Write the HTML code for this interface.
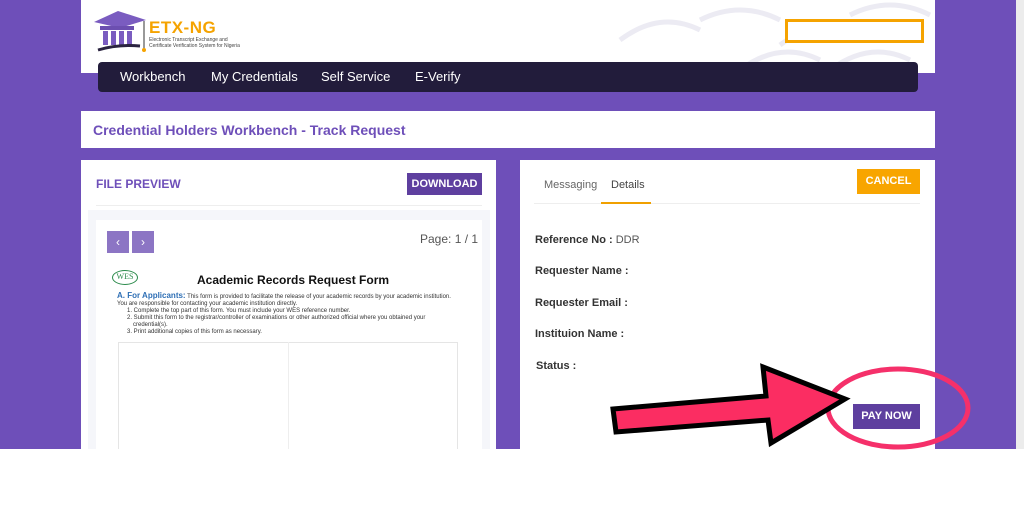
<!DOCTYPE html>
<html><head><meta charset="utf-8"><style>
*{margin:0;padding:0;box-sizing:border-box}
body{width:1024px;height:516px;background:#fff;font-family:"Liberation Sans",Arial,sans-serif;position:relative;overflow:hidden}
.a{position:absolute}
.purple{background:#6e4fb9}
</style></head><body>
<div class="a purple" style="left:0;top:0;width:1016px;height:449px"></div>
<div class="a" style="left:1016px;top:0;width:8px;height:449px;background:#ececec"></div>
<div class="a" style="left:81px;top:0;width:854px;height:73px;background:#fff"></div>
<svg class="a" style="left:600px;top:0" width="335" height="73">
<g fill="none" stroke="#ecebf3" stroke-width="5">
<path d="M20 40 q40-30 80-10 M100 20 q40-20 80 0 M180 45 q40-30 80-10 M250 15 q40-20 80 0 M140 70 q40-30 80-10 M230 70 q40-30 80-10"/>
</g></svg>
<svg class="a" style="left:92px;top:8px" width="60" height="45" viewBox="0 0 60 45">
<path d="M2 14 L26 3 L54 12 L28 20 Z" fill="#7a5cc0"/>
<path d="M8 18 h34 v4 h-34z" fill="#6c4fb0"/>
<rect x="11" y="23" width="5" height="14" fill="#7a5cc0"/><rect x="19" y="23" width="5" height="14" fill="#7a5cc0"/><rect x="27" y="23" width="5" height="14" fill="#7a5cc0"/><rect x="35" y="23" width="5" height="14" fill="#7a5cc0"/>
<path d="M6 42 q20 -6 42 -4" stroke="#2a2340" stroke-width="3" fill="none"/>
<path d="M52 13 v28" stroke="#333" stroke-width="1"/><circle cx="52" cy="42" r="2" fill="#f5a300"/>
</svg>
<div class="a" style="left:149px;top:18px;font-size:17px;font-weight:bold;color:#f5a300;letter-spacing:.5px">ETX-NG</div>
<div class="a" style="left:149px;top:37px;font-size:5px;line-height:6px;color:#444">Electronic Transcript Exchange and<br>Certificate Verification System for Nigeria</div>
<div class="a" style="left:785px;top:19px;width:139px;height:24px;border:3px solid #f5a300;background:#fff"></div>
<div class="a" style="left:98px;top:62px;width:820px;height:30px;background:#221c3b;border-radius:4px"></div>
<div class="a" style="left:120px;top:69px;font-size:13px;color:#fff">Workbench</div>
<div class="a" style="left:211px;top:69px;font-size:13px;color:#fff">My Credentials</div>
<div class="a" style="left:321px;top:69px;font-size:13px;color:#fff">Self Service</div>
<div class="a" style="left:415px;top:69px;font-size:13px;color:#fff">E-Verify</div>
<div class="a" style="left:81px;top:111px;width:854px;height:37px;background:#fff"></div>
<div class="a" style="left:93px;top:122px;font-size:14px;font-weight:bold;color:#6e4fb9">Credential Holders Workbench - Track Request</div>
<div class="a" style="left:81px;top:160px;width:415px;height:289px;background:#fff"></div>
<div class="a" style="left:96px;top:177px;font-size:12px;font-weight:bold;color:#6e4fb9">FILE PREVIEW</div>
<div class="a" style="left:407px;top:173px;width:75px;height:22px;background:#5e3f9f;color:#fff;font-size:11px;font-weight:bold;text-align:center;line-height:22px">DOWNLOAD</div>
<div class="a" style="left:96px;top:205px;width:386px;height:1px;background:#eee"></div>
<div class="a" style="left:88px;top:210px;width:402px;height:239px;background:#f5f6fa"></div>
<div class="a" style="left:96px;top:220px;width:386px;height:229px;background:#fff"></div>
<div class="a" style="left:107px;top:231px;width:22px;height:22px;background:#8c75c4;color:#fff;font-size:12px;text-align:center;line-height:22px">‹</div>
<div class="a" style="left:132px;top:231px;width:22px;height:22px;background:#8c75c4;color:#fff;font-size:12px;text-align:center;line-height:22px">›</div>
<div class="a" style="left:420px;top:232px;font-size:12px;color:#555">Page: 1 / 1</div>
<div class="a" style="left:112px;top:270px;width:26px;height:15px;border:1.5px solid #2a8a4a;border-radius:50%;font-size:8px;color:#2a8a4a;font-family:'Liberation Serif',serif;text-align:center;line-height:12px">WES</div>
<div class="a" style="left:197px;top:273px;font-size:12px;font-weight:bold;color:#111">Academic Records Request Form</div>
<div class="a" style="left:117px;top:292px;font-size:6px;color:#333;line-height:7px;width:345px"><b style="color:#2e6fb5;font-size:8px">A. For Applicants:</b> This form is provided to facilitate the release of your academic records by your academic institution. You are responsible for contacting your academic institution directly.<br>
<span style="padding-left:10px">1. Complete the top part of this form. You must include your WES reference number.</span><br>
<span style="padding-left:10px">2. Submit this form to the registrar/controller of examinations or other authorized official where you obtained your</span><br><span style="padding-left:16px">credential(s).</span><br>
<span style="padding-left:10px">3. Print additional copies of this form as necessary.</span></div>
<div class="a" style="left:118px;top:342px;width:340px;height:107px;border:1px solid #e5e5e5;border-bottom:none"></div>
<div class="a" style="left:288px;top:342px;width:1px;height:107px;background:#eee"></div>
<div class="a" style="left:520px;top:160px;width:415px;height:289px;background:#fff"></div>
<div class="a" style="left:544px;top:179px;font-size:11px;color:#666">Messaging</div>
<div class="a" style="left:611px;top:179px;font-size:11px;color:#444">Details</div>
<div class="a" style="left:534px;top:203px;width:386px;height:1px;background:#eee"></div>
<div class="a" style="left:601px;top:202px;width:50px;height:2px;background:#f0a000"></div>
<div class="a" style="left:857px;top:169px;width:63px;height:25px;background:#f8a500;color:#fff;font-size:11px;font-weight:bold;text-align:center;line-height:25px">CANCEL</div>
<div class="a" style="left:535px;top:234px;font-size:11px;color:#333"><b>Reference No :</b> <span style="color:#555">DDR</span></div>
<div class="a" style="left:535px;top:265px;font-size:11px;color:#333;font-weight:bold">Requester Name :</div>
<div class="a" style="left:535px;top:297px;font-size:11px;color:#333;font-weight:bold">Requester Email :</div>
<div class="a" style="left:535px;top:328px;font-size:11px;color:#333;font-weight:bold">Instituion Name :</div>
<div class="a" style="left:536px;top:360px;font-size:11px;color:#333;font-weight:bold">Status :</div>
<div class="a" style="left:853px;top:404px;width:67px;height:25px;background:#5e3f9f;color:#fff;font-size:11px;font-weight:bold;text-align:center;line-height:25px">PAY NOW</div>
<svg class="a" style="left:0;top:0" width="1024" height="516">
<ellipse cx="898" cy="408" rx="70" ry="39" fill="none" stroke="#f5306a" stroke-width="5"/>
<polygon points="613,409 766,396 763,367 845,399 771,443 768,420 616,432" fill="#fb2d62" stroke="#000" stroke-width="5" stroke-linejoin="miter"/>
</svg>
</body></html>
